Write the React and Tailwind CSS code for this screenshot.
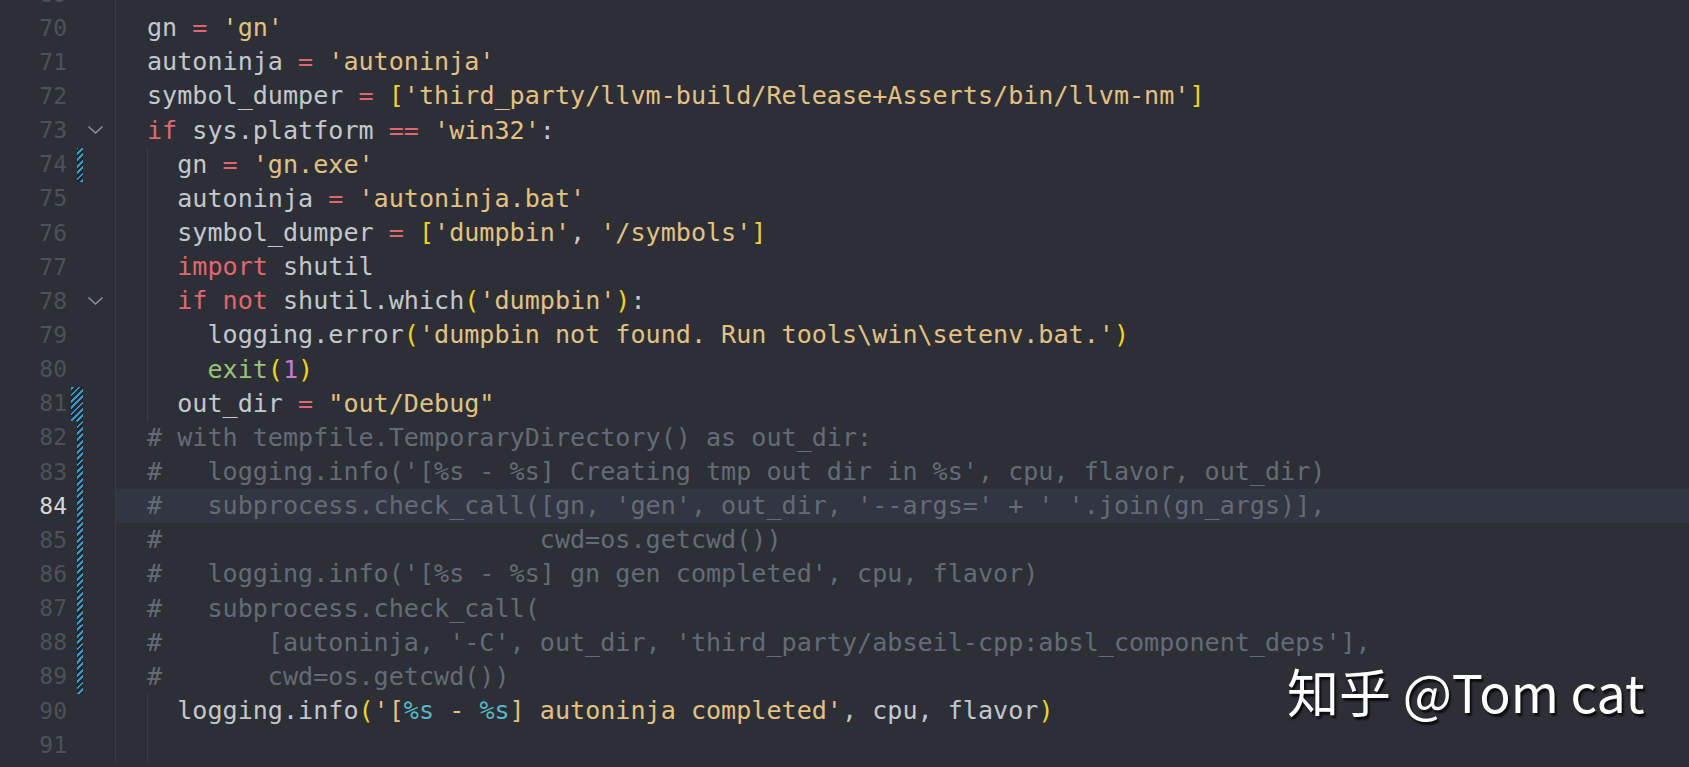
import React from 'react';

const T = "text-[#c3c7ce]";
const K = "text-[#e2666f]";
const S = "text-[#e3c183]";
const B = "text-[#f3d321]";
const N = "text-[#c678dd]";
const F = "text-[#98c379]";
const E = "text-[#56b6c2]";
const C = "text-[#646b76]";

// each line: number, indent guide, tokens, gutter extras
const lines = [
    { n: 69, tokens: [] },
    { n: 70, tokens: [["gn ", T], ["=", K], [" ", T], ["'gn'", S]] },
    { n: 71, tokens: [["autoninja ", T], ["=", K], [" ", T], ["'autoninja'", S]] },
    { n: 72, tokens: [["symbol_dumper ", T], ["=", K], [" ", T], ["[", B], ["'third_party/llvm-build/Release+Asserts/bin/llvm-nm'", S], ["]", B]] },
    { n: 73, fold: true, tokens: [["if", K], [" sys.platform ", T], ["==", K], [" ", T], ["'win32'", S], [":", T]] },
    { n: 74, guide: true, mark: "narrow", tokens: [["gn ", T], ["=", K], [" ", T], ["'gn.exe'", S]] },
    { n: 75, guide: true, tokens: [["autoninja ", T], ["=", K], [" ", T], ["'autoninja.bat'", S]] },
    { n: 76, guide: true, tokens: [["symbol_dumper ", T], ["=", K], [" ", T], ["[", B], ["'dumpbin'", S], [", ", T], ["'/symbols'", S], ["]", B]] },
    { n: 77, guide: true, tokens: [["import", K], [" shutil", T]] },
    { n: 78, guide: true, fold: true, tokens: [["if", K], [" ", T], ["not", K], [" shutil.which", T], ["(", B], ["'dumpbin'", S], [")", B], [":", T]] },
    { n: 79, guide: true, tokens: [["  logging.error", T], ["(", B], ["'dumpbin not found. Run tools\\win\\setenv.bat.'", S], [")", B]] },
    { n: 80, guide: true, tokens: [["  ", T], ["exit", F], ["(", B], ["1", N], [")", B]] },
    { n: 81, guide: true, mark: "wide", tokens: [["out_dir ", T], ["=", K], [" ", T], ["\"out/Debug\"", S]] },
    { n: 82, mark: "narrow", tokens: [["# with tempfile.TemporaryDirectory() as out_dir:", C]] },
    { n: 83, mark: "narrow", tokens: [["#   logging.info('[%s - %s] Creating tmp out dir in %s', cpu, flavor, out_dir)", C]] },
    { n: 84, mark: "narrow", current: true, tokens: [["#   subprocess.check_call([gn, 'gen', out_dir, '--args=' + ' '.join(gn_args)],", C]] },
    { n: 85, mark: "narrow", tokens: [["#                         cwd=os.getcwd())", C]] },
    { n: 86, mark: "narrow", tokens: [["#   logging.info('[%s - %s] gn gen completed', cpu, flavor)", C]] },
    { n: 87, mark: "narrow", tokens: [["#   subprocess.check_call(", C]] },
    { n: 88, mark: "narrow", tokens: [["#       [autoninja, '-C', out_dir, 'third_party/abseil-cpp:absl_component_deps'],", C]] },
    { n: 89, mark: "narrow", tokens: [["#       cwd=os.getcwd())", C]] },
    { n: 90, guide: true, tokens: [["logging.info", T], ["(", B], ["'[", S], ["%s", E], [" - ", S], ["%s", E], ["] autoninja completed'", S], [", cpu, flavor", T], [")", B]] },
    { n: 91, guide: true, tokens: [] },
];

const hatch = "bg-[repeating-linear-gradient(135deg,#3b98c4_0px,#3b98c4_2px,#23262d_2px,#23262d_4.5px)] bg-fixed";

const Chevron = () => (
    <svg width="17" height="10" viewBox="0 0 17 10" fill="none">
        <polyline points="1.5,1.5 8.5,8 15.5,1.5" stroke="#8b9099" strokeWidth="1.6" />
    </svg>
);

const CodeLine = ({ line }) => {
    return (
        <div className="flex h-[34.15px] items-stretch">
            <div className="flex w-[116px] shrink-0 items-center border-r border-[#3a3c44]">
                <span className={`w-[67px] text-right text-[23px] ${line.current ? "text-[#d6d6d6]" : "text-[#4c515b]"}`}>
                    {line.n}
                </span>
                <div className="ml-[4px] flex h-full w-[12px] justify-end">
                    {line.mark === "wide" && <div className={`h-full w-[12px] ${hatch}`}></div>}
                    {line.mark === "narrow" && <div className={`h-full w-[6px] ${hatch}`}></div>}
                </div>
                <div className="ml-[4px] flex w-[17px] items-center">
                    {line.fold && <Chevron />}
                </div>
            </div>
            <div className={`flex flex-1 items-center pl-[31px] whitespace-pre ${line.current ? "bg-[#313642]" : ""}`}>
                {line.guide && <span className="inline-block h-full w-[2ch] border-l border-[#3a3d46]"></span>}
                {line.tokens.map((t, i) => (
                    <span key={i} className={t[1]}>{t[0]}</span>
                ))}
            </div>
        </div>
    );
};

const App = () => {
    return (
        <div className="relative h-[767px] w-full overflow-hidden bg-[#2d2f36] font-['DejaVu_Sans_Mono',monospace] text-[25.1px]">
            <div className="mt-[-23.2px] flex flex-col">
                {lines.map(line => (
                    <CodeLine key={line.n} line={line} />
                ))}
            </div>
            <div className="absolute left-[1287px] top-[665px] whitespace-pre font-['Noto_Sans_CJK_SC',sans-serif] text-[52px] leading-none text-white [text-shadow:2px_3px_2px_rgba(0,0,0,0.75)]">
                知乎 @Tom cat
            </div>
        </div>
    );
};

export default App;
